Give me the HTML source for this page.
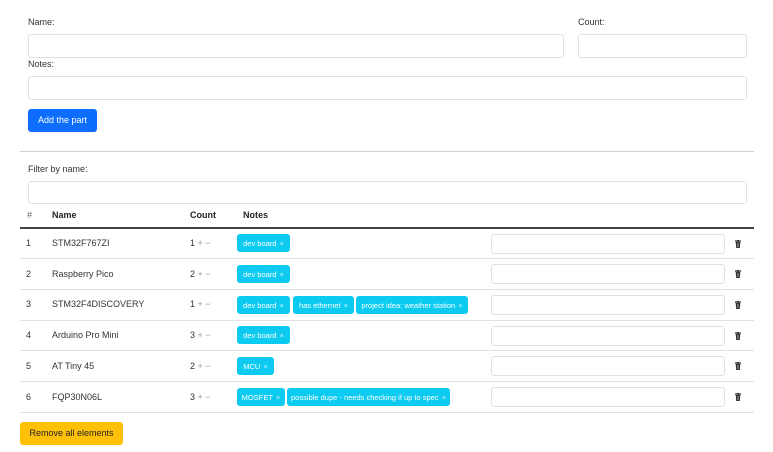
<!DOCTYPE html>
<html><head><meta charset="utf-8"><style>
*{box-sizing:border-box;margin:0;padding:0}
body{width:773px;height:452px;background:#fff;font-family:"Liberation Sans",sans-serif;color:#212529;position:relative;overflow:hidden}
.a{position:absolute}
.lbl{font-size:9px;color:#333}
.inp{position:absolute;border:1px solid #dee2e6;border-radius:3px;background:#fff}
.line{position:absolute;left:20px;width:734px;height:1px;background:#dee2e6}
.td{position:absolute;font-size:9px;color:#333;line-height:12px}
.cnt{color:#333}.cnt span{color:#999}
.bd{position:absolute;height:18px;background:#0dcaf0;color:#fff;font-size:7.5px;display:flex;align-items:center;justify-content:center;border-radius:3px;white-space:nowrap}
.bd i{font-style:normal;color:#c8f2fb;margin-left:3px}
.tr{position:absolute;left:735px;width:6px;height:8px}
</style></head><body>
<div class="a lbl" style="left:28px;top:17px">Name:</div>
<div class="inp" style="left:28px;top:34px;width:536px;height:24px"></div>
<div class="a lbl" style="left:578px;top:17px">Count:</div>
<div class="inp" style="left:578px;top:34px;width:169px;height:24px"></div>
<div class="a lbl" style="left:28px;top:59px">Notes:</div>
<div class="inp" style="left:28px;top:76px;width:719px;height:24px"></div>
<div class="a" style="left:28px;top:109px;width:69px;height:23px;background:#0d6efd;border-radius:3px;color:#fff;font-size:9px;line-height:23px;text-align:center">Add the part</div>
<div class="a" style="left:20px;top:151px;width:734px;height:1px;background:#d0d0d0"></div>
<div class="a lbl" style="left:28px;top:164px">Filter by name:</div>
<div class="inp" style="left:28px;top:181px;width:719px;height:23px"></div>
<div class="td" style="left:27px;top:209px;color:#666">#</div>
<div class="td" style="left:52px;top:209px;font-weight:bold;color:#212529">Name</div>
<div class="td" style="left:190px;top:209px;font-weight:bold;color:#212529">Count</div>
<div class="td" style="left:243px;top:209px;font-weight:bold;color:#212529">Notes</div>
<div class="a" style="left:20px;top:227px;width:734px;height:2px;background:#444"></div>

<div class="td" style="left:26px;top:237px">1</div><div class="td" style="left:52px;top:237px">STM32F767ZI</div><div class="td cnt" style="left:190px;top:237px">1 <span>+ −</span></div>
<div class="bd" style="left:237px;top:234px;width:53px">dev board<i>×</i></div>
<div class="inp" style="left:491px;top:234px;width:234px;height:20px"></div>
<div class="line" style="top:258px"></div>

<div class="td" style="left:26px;top:268px">2</div><div class="td" style="left:52px;top:268px">Raspberry Pico</div><div class="td cnt" style="left:190px;top:268px">2 <span>+ −</span></div>
<div class="bd" style="left:237px;top:265px;width:53px">dev board<i>×</i></div>
<div class="inp" style="left:491px;top:264px;width:234px;height:20px"></div>
<div class="line" style="top:289px"></div>

<div class="td" style="left:26px;top:298px">3</div><div class="td" style="left:52px;top:298px">STM32F4DISCOVERY</div><div class="td cnt" style="left:190px;top:298px">1 <span>+ −</span></div>
<div class="bd" style="left:237px;top:296px;width:53px">dev board<i>×</i></div>
<div class="bd" style="left:293px;top:296px;width:61px">has ethernet<i>×</i></div>
<div class="bd" style="left:356px;top:296px;width:112px">project idea: weather station<i>×</i></div>
<div class="inp" style="left:491px;top:295px;width:234px;height:20px"></div>
<div class="line" style="top:320px"></div>

<div class="td" style="left:26px;top:329px">4</div><div class="td" style="left:52px;top:329px">Arduino Pro Mini</div><div class="td cnt" style="left:190px;top:329px">3 <span>+ −</span></div>
<div class="bd" style="left:237px;top:326px;width:53px">dev board<i>×</i></div>
<div class="inp" style="left:491px;top:326px;width:234px;height:20px"></div>
<div class="line" style="top:350px"></div>

<div class="td" style="left:26px;top:360px">5</div><div class="td" style="left:52px;top:360px">AT Tiny 45</div><div class="td cnt" style="left:190px;top:360px">2 <span>+ −</span></div>
<div class="bd" style="left:237px;top:357px;width:37px">MCU<i>×</i></div>
<div class="inp" style="left:491px;top:356px;width:234px;height:20px"></div>
<div class="line" style="top:381px"></div>

<div class="td" style="left:26px;top:391px">6</div><div class="td" style="left:52px;top:391px">FQP30N06L</div><div class="td cnt" style="left:190px;top:391px">3 <span>+ −</span></div>
<div class="bd" style="left:237px;top:388px;width:48px">MOSFET<i>×</i></div>
<div class="bd" style="left:287px;top:388px;width:163px">possible dupe - needs checking if up to spec<i>×</i></div>
<div class="inp" style="left:491px;top:387px;width:234px;height:20px"></div>
<div class="line" style="top:412px"></div>

<svg class="tr" style="top:240px" viewBox="0 0 6 8"><rect x="0" y="0.5" width="6" height="1.2" fill="#222"/><rect x="2" y="0" width="2" height="1" fill="#222"/><path d="M0.7 2h4.6l-0.5 6H1.2z" fill="#333"/><path d="M2.3 3v4M3.7 3v4" stroke="#aaa" stroke-width="0.5"/></svg>
<svg class="tr" style="top:270px" viewBox="0 0 6 8"><rect x="0" y="0.5" width="6" height="1.2" fill="#222"/><rect x="2" y="0" width="2" height="1" fill="#222"/><path d="M0.7 2h4.6l-0.5 6H1.2z" fill="#333"/><path d="M2.3 3v4M3.7 3v4" stroke="#aaa" stroke-width="0.5"/></svg>
<svg class="tr" style="top:301px" viewBox="0 0 6 8"><rect x="0" y="0.5" width="6" height="1.2" fill="#222"/><rect x="2" y="0" width="2" height="1" fill="#222"/><path d="M0.7 2h4.6l-0.5 6H1.2z" fill="#333"/><path d="M2.3 3v4M3.7 3v4" stroke="#aaa" stroke-width="0.5"/></svg>
<svg class="tr" style="top:332px" viewBox="0 0 6 8"><rect x="0" y="0.5" width="6" height="1.2" fill="#222"/><rect x="2" y="0" width="2" height="1" fill="#222"/><path d="M0.7 2h4.6l-0.5 6H1.2z" fill="#333"/><path d="M2.3 3v4M3.7 3v4" stroke="#aaa" stroke-width="0.5"/></svg>
<svg class="tr" style="top:362px" viewBox="0 0 6 8"><rect x="0" y="0.5" width="6" height="1.2" fill="#222"/><rect x="2" y="0" width="2" height="1" fill="#222"/><path d="M0.7 2h4.6l-0.5 6H1.2z" fill="#333"/><path d="M2.3 3v4M3.7 3v4" stroke="#aaa" stroke-width="0.5"/></svg>
<svg class="tr" style="top:393px" viewBox="0 0 6 8"><rect x="0" y="0.5" width="6" height="1.2" fill="#222"/><rect x="2" y="0" width="2" height="1" fill="#222"/><path d="M0.7 2h4.6l-0.5 6H1.2z" fill="#333"/><path d="M2.3 3v4M3.7 3v4" stroke="#aaa" stroke-width="0.5"/></svg>

<div class="a" style="left:20px;top:422px;width:103px;height:23px;background:#ffc107;border-radius:3px;color:#212529;font-size:9px;line-height:23px;text-align:center">Remove all elements</div>
</body></html>
